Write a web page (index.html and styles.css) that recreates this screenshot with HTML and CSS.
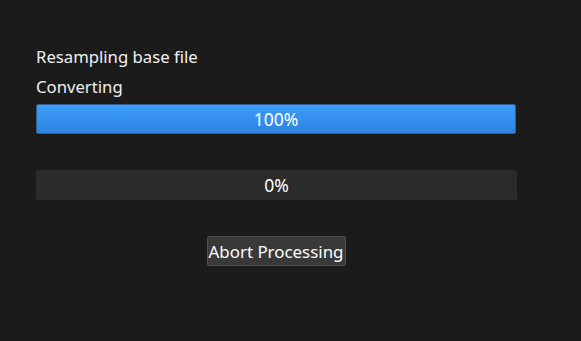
FILE: index.html
```html
<!DOCTYPE html>
<html>
<head>
<meta charset="utf-8">
<link rel="stylesheet" href="styles.css">
</head>
<body>
<div class="panel">
  <div class="label">Resampling base file</div>
  <div class="label">Converting</div>
  <div class="bar bar-full"><span>100%</span></div>
  <div class="bar bar-empty"><span>0%</span></div>
  <div class="actions"><button class="btn">Abort Processing</button></div>
</div>
</body>
</html>
```
FILE: styles.css
```css
html, body {
  margin: 0;
  padding: 0;
  background: #1b1b1b;
  width: 581px;
  height: 341px;
  overflow: hidden;
}
body {
  font-family: "Noto Sans", "DejaVu Sans", sans-serif;
  color: #f0f0f0;
  font-size: 16.7px;
}
.panel {
  padding: 42px 0 0 36px;
  width: 480px;
  display: flex;
  flex-direction: column;
}
.label {
  height: 30px;
  line-height: 30px;
}
.bar {
  box-sizing: border-box;
  height: 30px;
  display: flex;
  align-items: center;
  justify-content: center;
  border-radius: 2px;
  font-size: 17.5px;
}
.bar-full {
  margin-top: 2px;
  background: linear-gradient(#3c9df9, #2d84de);
  border: 1px solid #2f5f94;
  color: #fff;
}
.bar-empty {
  margin-top: 36px;
  background: #2b2b2b;
  width: 481px;
  color: #fff;
}
.actions {
  margin-top: 36px;
  display: flex;
  justify-content: center;
}
.btn {
  box-sizing: border-box;
  width: 139px;
  height: 30px;
  padding: 0;
  background: #393939;
  border: 1px solid #4e4e4e;
  border-radius: 2px;
  color: #fff;
  font-family: inherit;
  font-size: 16.9px;
}
```
